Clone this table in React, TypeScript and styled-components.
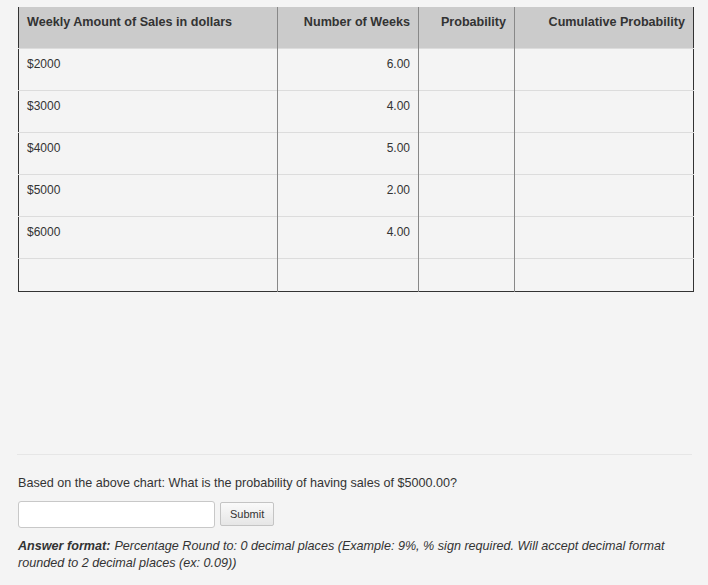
import React from 'react';
import styled, { createGlobalStyle } from 'styled-components';

const GlobalStyle = createGlobalStyle`
  html, body {
    margin: 0;
    padding: 0;
    background: #f4f4f4;
    font-family: "Liberation Sans", Arial, sans-serif;
    color: #333;
  }
`;

const Page = styled.div`
  padding: 7px 16px 0 18px;
  width: 674px;
`;

const Table = styled.table`
  width: 675px;
  border-collapse: collapse;
  table-layout: fixed;
  border-left: 1px solid #333;
  border-right: 1px solid #333;
  border-bottom: 1px solid #333;
  font-size: 12px;
`;

const HeadCell = styled.th<{ $left?: boolean }>`
  background: #cbcbcb;
  height: 41px;
  box-sizing: border-box;
  padding: 7px 8px 0;
  font-weight: bold;
  font-size: 12.6px;
  line-height: 16px;
  color: #333;
  text-align: ${(p) => (p.$left ? 'left' : 'right')};
  border-left: 1px solid #888;
  vertical-align: top;
`;

const Cell = styled.td<{ $left?: boolean; $short?: boolean }>`
  height: ${(p) => (p.$short ? '33px' : '42px')};
  padding: 7px 8px 0;
  box-sizing: border-box;
  vertical-align: top;
  text-align: ${(p) => (p.$left ? 'left' : 'right')};
  border-left: 1px solid #888;
  border-top: 1px solid #dcdcdc;
  line-height: 16px;
`;

const Divider = styled.hr`
  border: none;
  border-top: 1px solid #e6e6e6;
  margin: 162px 0 0 -1px;
  width: 675px;
`;

const Question = styled.p`
  margin: 20px 0 0;
  font-size: 12.6px;
  line-height: 16px;
`;

const AnswerRow = styled.div`
  display: flex;
  align-items: center;
  gap: 5px;
  margin-top: 10px;
`;

const Input = styled.input`
  width: 197px;
  height: 27px;
  box-sizing: border-box;
  background: #fff;
  border: 1px solid #c8c8c8;
  border-radius: 3px;
`;

const SubmitButton = styled.button`
  height: 24px;
  padding: 0 9px;
  font-family: "Liberation Sans", Arial, sans-serif;
  font-size: 11px;
  color: #333;
  background: linear-gradient(#fafafa, #e6e6e6);
  border: 1px solid #c4c4c4;
  border-radius: 2px;
`;

const Format = styled.p`
  margin: 10px 0 0;
  font-size: 12.6px;
  line-height: 17px;
  font-style: italic;
  color: #333;
  width: 670px;
`;

const Label = styled.b`
  display: inline-block;
  margin-right: 4px;
`;

const rows = [
  ['$2000', '6.00'],
  ['$3000', '4.00'],
  ['$4000', '5.00'],
  ['$5000', '2.00'],
  ['$6000', '4.00'],
];

export default function App() {
  return (
    <Page>
      <GlobalStyle />
      <Table>
        <colgroup>
          <col style={{ width: 259 }} />
          <col style={{ width: 141 }} />
          <col style={{ width: 96 }} />
          <col style={{ width: 179 }} />
        </colgroup>
        <thead>
          <tr>
            <HeadCell $left style={{ borderLeft: 'none' }}>Weekly Amount of Sales in dollars</HeadCell>
            <HeadCell>Number of Weeks</HeadCell>
            <HeadCell>Probability</HeadCell>
            <HeadCell>Cumulative Probability</HeadCell>
          </tr>
        </thead>
        <tbody>
          {rows.map(([amount, weeks]) => (
            <tr key={amount}>
              <Cell $left style={{ borderLeft: 'none' }}>{amount}</Cell>
              <Cell>{weeks}</Cell>
              <Cell />
              <Cell />
            </tr>
          ))}
          <tr>
            <Cell $left $short style={{ borderLeft: 'none' }} />
            <Cell $short />
            <Cell $short />
            <Cell $short />
          </tr>
        </tbody>
      </Table>
      <Divider />
      <Question>Based on the above chart: What is the probability of having sales of $5000.00?</Question>
      <AnswerRow>
        <Input type="text" />
        <SubmitButton>Submit</SubmitButton>
      </AnswerRow>
      <Format>
        <Label>Answer format:</Label>Percentage Round to: 0 decimal places (Example: 9%, % sign required. Will accept decimal format rounded to 2 decimal places (ex: 0.09))
      </Format>
    </Page>
  );
}
